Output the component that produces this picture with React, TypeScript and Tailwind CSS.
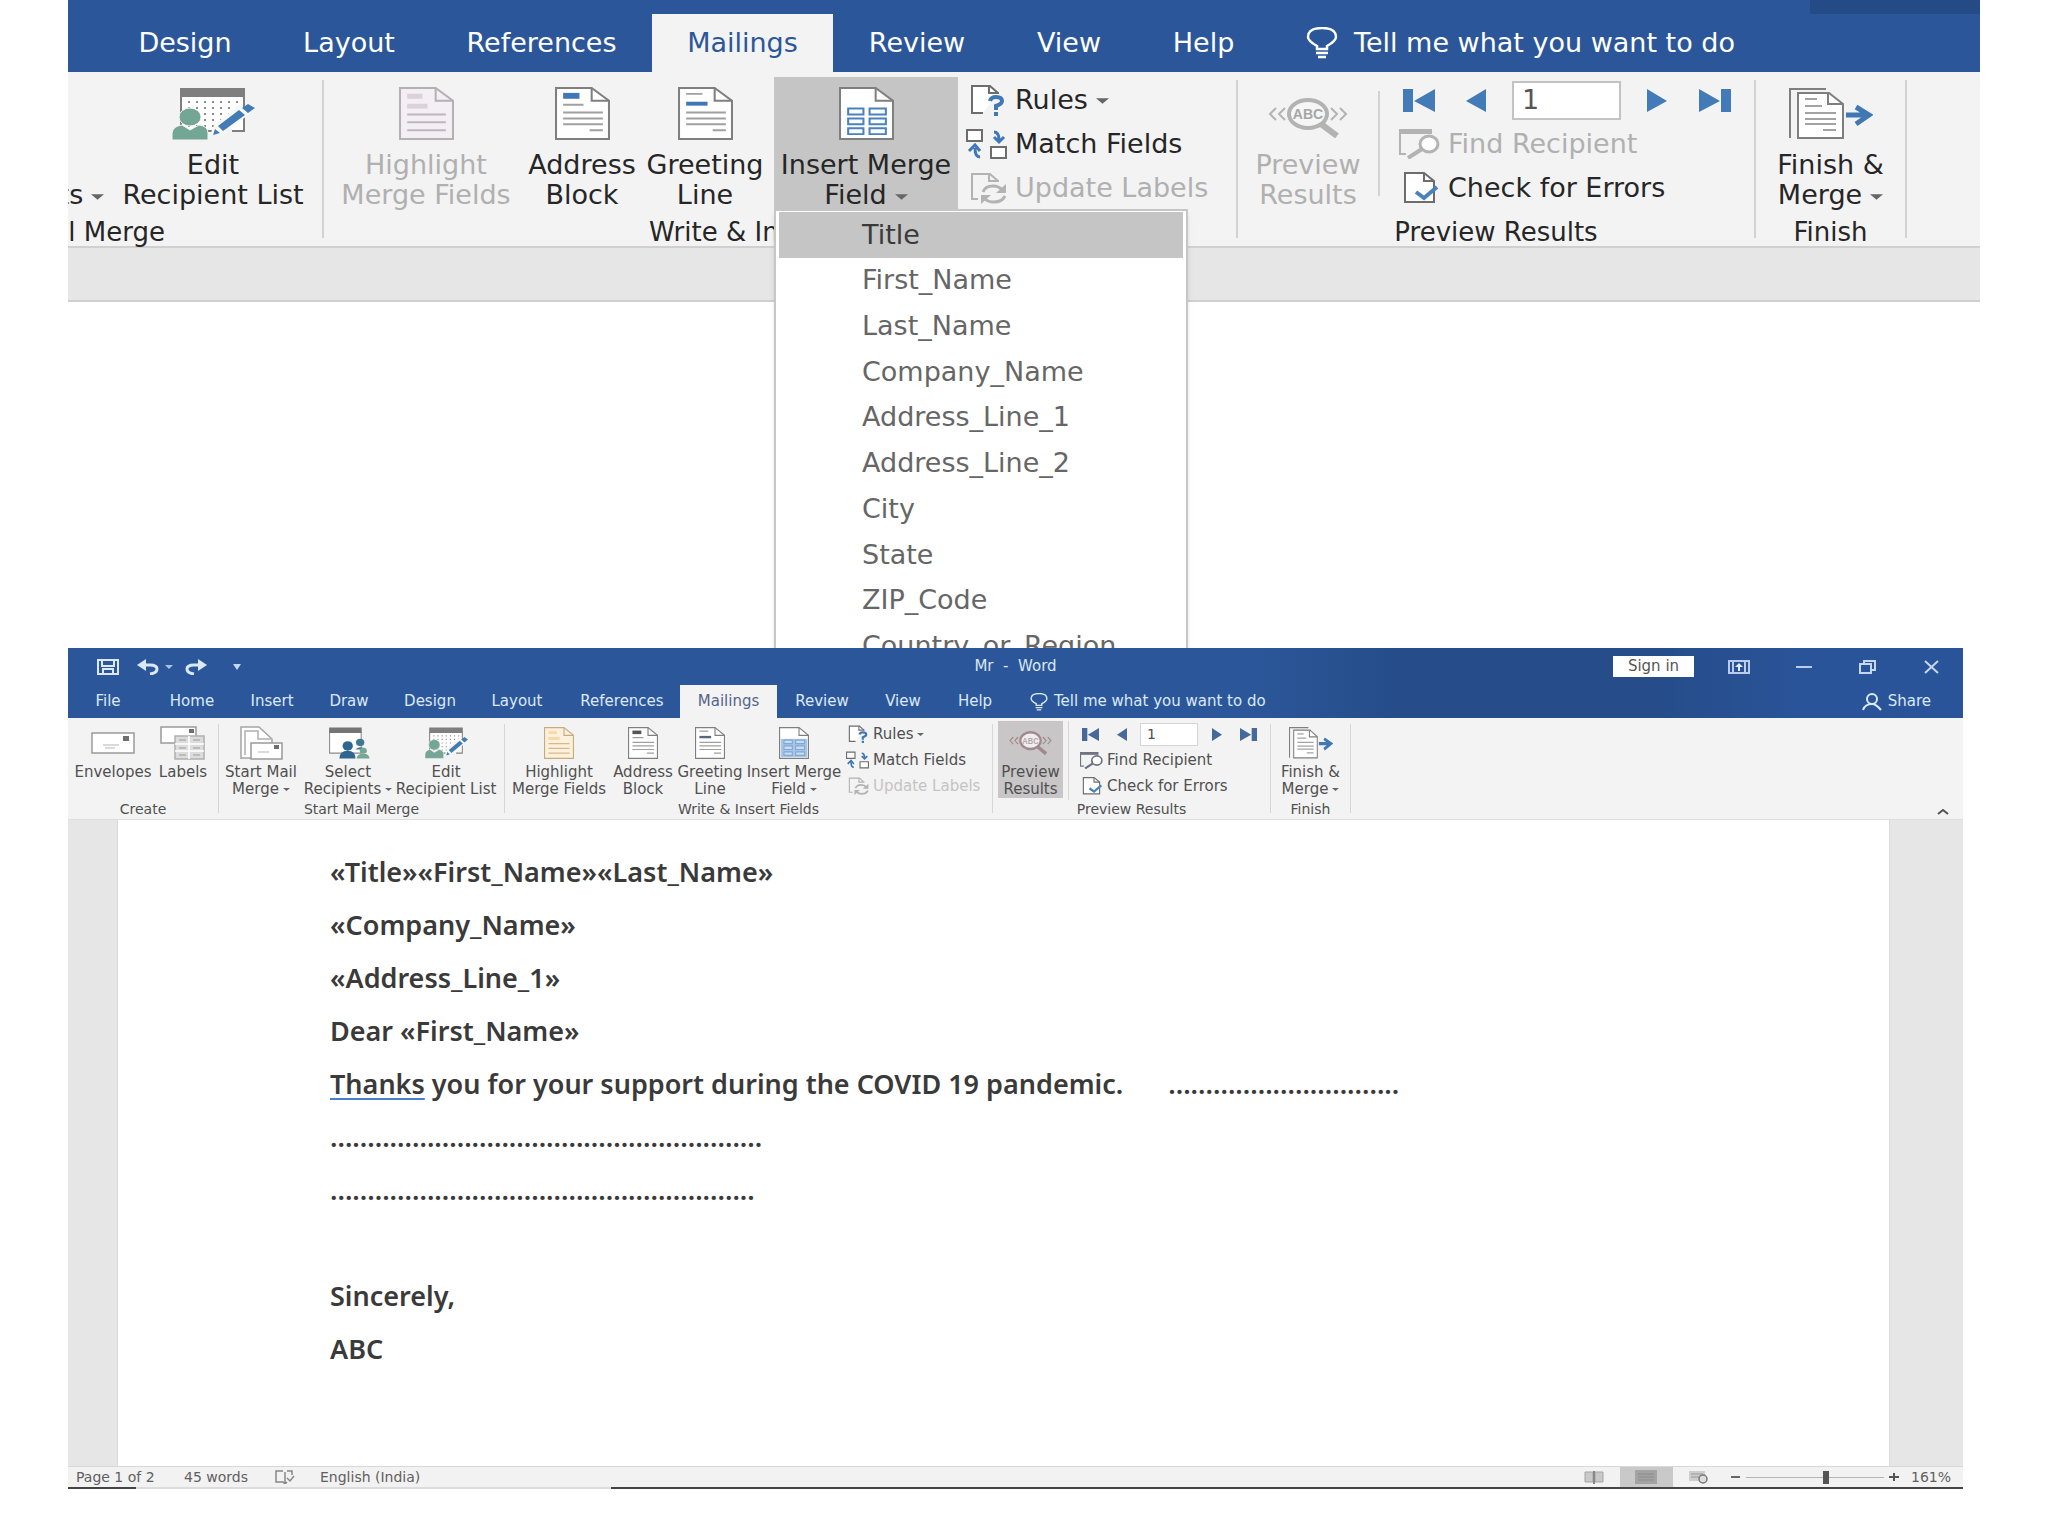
import React from "react";

type Children = { children?: React.ReactNode };

/* ---------- Icons ---------- */

function Sheet({ className, tone = "#7f7f7f", fill = "#fff", children }: Children & { className: string; tone?: string; fill?: string }) {
  return (
    <svg viewBox="0 0 54 54" preserveAspectRatio="none" className={className} aria-hidden="true">
      <path d="M1 1H36L53 14V53H1Z" fill={fill} stroke={tone} strokeWidth="2" />
      <path d="M36 1V14H53" fill="none" stroke={tone} strokeWidth="2" />
      {children}
    </svg>
  );
}

function HighlightIcon({ className, gold }: { className: string; gold?: boolean }) {
  const line = gold ? "#d9b98c" : "#bdb6bb";
  const block = gold ? "#f5d9a8" : "#d9d3d8";
  return (
    <Sheet className={className} tone={gold ? "#c9ab80" : "#b4b0b3"} fill={gold ? "#fdf0dc" : "#f4eff4"}>
      <path d="M8 7H23V12H8ZM8 17H28V22H8Z" fill={block} />
      <path d="M8 28H46M8 36H46M8 44H46" stroke={line} strokeWidth="2" />
    </Sheet>
  );
}

function AddressIcon({ className, accent = "#3f78b8" }: { className: string; accent?: string }) {
  return (
    <Sheet className={className}>
      <path d="M8 6H24V12H8Z" fill={accent} />
      <path d="M8 18H28M8 26H47M8 32H47M8 38H47M34 44H47" stroke="#a0a0a0" strokeWidth="2" />
    </Sheet>
  );
}

function GreetingIcon({ className, accent = "#3f78b8" }: { className: string; accent?: string }) {
  return (
    <Sheet className={className}>
      <path d="M8 7H24M8 26H47M8 32H47M8 38H47M34 44H47" stroke="#a0a0a0" strokeWidth="2" />
      <path d="M8 15H29V19H8Z" fill={accent} />
    </Sheet>
  );
}

function MergeFieldIcon({ className, filled }: { className: string; filled?: boolean }) {
  return (
    <Sheet className={className}>
      {filled && <path d="M3 20H51V51H3Z" fill="#a9c6e6" />}
      <path
        d="M9 22H24V28H9ZM30 22H46V28H30ZM9 32H24V38H9ZM30 32H46V38H30ZM9 42H24V48H9ZM30 42H46V48H30Z"
        fill={filled ? "#c9dcf0" : "#fff"}
        stroke={filled ? "#7fa8d3" : "#4a82bd"}
        strokeWidth="2"
      />
    </Sheet>
  );
}

function EditListIcon({ className }: { className: string }) {
  return (
    <svg viewBox="0 0 83 54" preserveAspectRatio="none" className={className} aria-hidden="true">
      <path d="M9 9H72V44H9Z" fill="#fff" stroke="#7f7f7f" strokeWidth="2" />
      <path d="M8 1H73V10H8Z" fill="#7f7f7f" />
      <path d="M16 15H68M16 21H68M16 27H68M16 33H68M16 39H60" stroke="#8c8c8c" strokeWidth="2" strokeDasharray="2 6" />
      <path d="M40 42H60V46H40Z" fill="#f3f3f3" />
      <path d="M0 53V46Q1 39 10 38L18 43L27 38Q36 39 36 46V53Z" fill="#74a695" stroke="#f3f3f3" />
      <ellipse cx="18" cy="30" rx="11" ry="9" fill="#74a695" stroke="#f3f3f3" />
      <path d="M38 48L42 38L67 18L79 26L52 46Z" fill="#f8f8f8" />
      <path d="M41 48L43 42L48 46ZM46 39L67 23L73 28L51 44ZM70 21L76 17L83 21L76 26Z" fill="#427cb5" />
    </svg>
  );
}

function SelectRecipientsIcon({ className }: { className: string }) {
  return (
    <svg viewBox="0 0 83 54" preserveAspectRatio="none" className={className} aria-hidden="true">
      <path d="M5 9H66V44H5Z" fill="#fff" stroke="#8a8a8a" strokeWidth="2" />
      <path d="M4 1H67V10H4Z" fill="#757575" />
      <ellipse cx="40" cy="32" rx="10" ry="8" fill="#2f6690" />
      <path d="M24 53Q24 40 40 40Q55 40 55 53Z" fill="#2f6690" />
      <ellipse cx="64" cy="26" rx="8" ry="6" fill="#3d7892" />
      <path d="M55 38Q64 30 74 38Z" fill="#3d7892" />
      <ellipse cx="70" cy="40" rx="7" ry="5" fill="#74a695" />
      <path d="M57 53Q58 45 70 45Q82 45 82 53Z" fill="#74a695" />
    </svg>
  );
}

function EnvelopeIcon() {
  return (
    <svg viewBox="0 0 44 22" className="h-[22px] w-[44px]" aria-hidden="true">
      <path d="M1 1H43V21H1Z" fill="#fff" stroke="#9a9a9a" strokeWidth="1.5" />
      <path d="M32 4H38V9H32Z" fill="#6f6f6f" />
      <path d="M12 13H28M14 16H24" stroke="#b5b5b5" />
    </svg>
  );
}

function LabelsIcon() {
  return (
    <svg viewBox="0 0 46 34" className="h-[34px] w-[46px]" aria-hidden="true">
      <path d="M1 1H36V17H1Z" fill="#fff" stroke="#9a9a9a" strokeWidth="1.5" />
      <path d="M29 3H34V7H29Z" fill="#6f6f6f" />
      <path d="M15 10H44V33H15Z" fill="#dcdcdc" stroke="#b0b0b0" strokeWidth="1.5" />
      <path d="M15 18H44M15 25H44M29 10V33" stroke="#fff" strokeWidth="1.5" />
      <path d="M19 14H26M33 14H40M19 22H26M33 22H40M19 29H26M33 29H40" stroke="#9c9c9c" />
    </svg>
  );
}

function StartMergeIcon() {
  return (
    <svg viewBox="0 0 43 34" className="h-[34px] w-[43px]" aria-hidden="true">
      <path d="M1 33V1H19L32 13V32H1" fill="#fff" stroke="#a5a5a5" strokeWidth="1.5" />
      <path d="M5 29V5H18V13H32" fill="none" stroke="#b0b0b0" strokeWidth="1.5" />
      <path d="M11 17H42V33H11Z" fill="#fff" stroke="#9a9a9a" strokeWidth="1.5" />
      <path d="M34 19H39V23H34Z" fill="#6f6f6f" />
      <path d="M18 26H29" stroke="#b5b5b5" />
    </svg>
  );
}

function RulesIcon({ className }: { className: string }) {
  return (
    <svg viewBox="0 0 41 32" preserveAspectRatio="none" className={className} aria-hidden="true">
      <path d="M17 29H6V2H24L32 9" fill="#fff" stroke="#6d6d6d" strokeWidth="2" />
      <path d="M23 2V9H33" fill="none" stroke="#6d6d6d" strokeWidth="2" />
      <path d="M24 17Q25 13 30 13Q36 13 36 17Q36 20 30 22V26M30 28V32" fill="none" stroke="#3f78b8" strokeWidth="4" />
    </svg>
  );
}

function MatchIcon({ className }: { className: string }) {
  return (
    <svg viewBox="0 0 41 32" preserveAspectRatio="none" className={className} aria-hidden="true">
      <path d="M1 2H16V13H1ZM25 19H40V30H25Z" fill="#fff" stroke="#6d6d6d" strokeWidth="2" />
      <path d="M28 4Q33 4 33 12M28 9L33 14L38 9" fill="none" stroke="#3f78b8" strokeWidth="3" />
      <path d="M14 29Q9 29 9 20M3 23L9 17L14 23" fill="none" stroke="#3f78b8" strokeWidth="3" />
    </svg>
  );
}

function UpdateIcon({ className }: { className: string }) {
  return (
    <svg viewBox="0 0 41 32" preserveAspectRatio="none" className={className} aria-hidden="true">
      <path d="M12 27H6V2H24L32 9M23 2V9H33" fill="none" stroke="#b3b3b3" strokeWidth="2" />
      <path d="M17 20Q19 14 27 14Q33 14 36 18M39 24Q36 30 28 30Q22 30 19 27" fill="none" stroke="#b3b3b3" strokeWidth="3" />
      <path d="M40 12V21H30ZM15 32V23H25Z" fill="#b3b3b3" />
    </svg>
  );
}

function PreviewIcon({ className, strong }: { className: string; strong?: boolean }) {
  const tone = strong ? "#a0888c" : "#b3b3b3";
  return (
    <svg viewBox="0 0 80 40" preserveAspectRatio="none" className={className} aria-hidden="true">
      <path d="M8 10L2 16L8 22M17 10L11 16L17 22M72 10L78 16L72 22M63 10L69 16L63 22" fill="none" stroke={tone} strokeWidth="2" />
      <ellipse cx="40" cy="16" rx="19" ry="14" fill={strong ? "#eee" : "#f6f6f6"} stroke={tone} strokeWidth="4" />
      <path d="M53 26L69 38" stroke={tone} strokeWidth="6" />
      <text x="40" y="21" textAnchor="middle" fontSize="14" fontWeight="700" fontFamily="Liberation Sans, sans-serif" fill={strong ? "#b5a5a8" : "#a6a6a6"}>
        ABC
      </text>
    </svg>
  );
}

function FindIcon({ className, tone }: { className: string; tone: string }) {
  return (
    <svg viewBox="0 0 41 30" preserveAspectRatio="none" className={className} aria-hidden="true">
      <path d="M1 1V25H7" fill="none" stroke={tone} strokeWidth="2" />
      <path d="M0 0H33V5H0Z" fill={tone} />
      <ellipse cx="30" cy="15" rx="9" ry="8" fill="#fff" stroke={tone} strokeWidth="3" />
      <path d="M23 20L9 29" stroke={tone} strokeWidth="4" />
    </svg>
  );
}

function CheckIcon({ className }: { className: string }) {
  return (
    <svg viewBox="0 0 41 32" preserveAspectRatio="none" className={className} aria-hidden="true">
      <path d="M6 1H25L35 9V30H6Z" fill="#fff" stroke="#6d6d6d" strokeWidth="2" />
      <path d="M25 1V9H35" fill="none" stroke="#6d6d6d" strokeWidth="2" />
      <path d="M17 20L25 26L38 15" fill="none" stroke="#4a82bd" strokeWidth="4" />
    </svg>
  );
}

function FinishIcon({ className }: { className: string }) {
  return (
    <svg viewBox="0 0 84 52" preserveAspectRatio="none" className={className} aria-hidden="true">
      <path d="M1 50V1H37" fill="none" stroke="#7f7f7f" strokeWidth="2" />
      <path d="M9 5H40L54 16V50H9Z" fill="#fff" stroke="#7f7f7f" strokeWidth="2" />
      <path d="M39 5V16H54" fill="none" stroke="#7f7f7f" strokeWidth="2" />
      <path d="M16 11H28M16 18H33M16 25H47M16 31H47M16 36H47M34 42H47" stroke="#a3a3a3" strokeWidth="2" />
      <path d="M57 27H80M67 19L80 27L67 36" fill="none" stroke="#4178b4" strokeWidth="5" />
    </svg>
  );
}

function Step({ kind, className, tone = "#437bb8" }: { kind: "first" | "prev" | "next" | "last"; className: string; tone?: string }) {
  const d = {
    first: "M0 0H10V23H0ZM32 0V23L11 12Z",
    prev: "M20 0V23L0 12Z",
    next: "M0 0V23L20 12Z",
    last: "M0 0V23L21 12ZM22 0H32V23H22Z",
  }[kind];
  const wide = kind === "first" || kind === "last";
  return (
    <svg viewBox={wide ? "0 0 32 23" : "0 0 20 23"} preserveAspectRatio="none" className={className} aria-hidden="true">
      <path d={d} fill={tone} />
    </svg>
  );
}

function Bulb({ className }: { className: string }) {
  return (
    <svg viewBox="0 0 32 32" preserveAspectRatio="none" className={className} aria-hidden="true">
      <path
        d="M11 22V19Q2 14 2 10Q2 1 16 1Q30 1 30 10Q30 14 21 19V22ZM10 26H22M12 30H20"
        fill="none"
        stroke="currentColor"
        strokeWidth="2.5"
      />
    </svg>
  );
}

function Caret({ big }: { big?: boolean }) {
  return (
    <svg viewBox="0 0 14 6" className={big ? "ml-2 inline-block h-[6px] w-[13px] align-middle" : "ml-1 inline-block h-[3px] w-[7px] align-middle"} aria-hidden="true">
      <path d="M0 0H14L7 6Z" fill="#666" />
    </svg>
  );
}

/* ---------- Close-up ribbon ---------- */

function BigButton({ icon, children, className }: Children & { icon: React.ReactNode; className: string }) {
  return (
    <button type="button" className={`flex h-[133px] shrink-0 flex-col items-center whitespace-nowrap text-center ${className}`}>
      <span className="flex h-[73px] shrink-0 items-center justify-center">{icon}</span>
      <span className="block leading-[30px]">{children}</span>
    </button>
  );
}

function BigRow({ icon, children, muted }: Children & { icon: React.ReactNode; muted?: boolean }) {
  return (
    <button type="button" className={`flex h-[44px] items-center gap-2 whitespace-nowrap ${muted ? "text-[#b0b0b0]" : ""}`}>
      {icon}
      <span>{children}</span>
    </button>
  );
}

function BigGroup({ label, children, className, labelClass = "text-center" }: Children & { label: string; className: string; labelClass?: string }) {
  return (
    <div className={`flex shrink-0 flex-col pt-[5px] ${className}`}>
      <div className="flex h-[133px] w-full">{children}</div>
      <div className={`pt-[6px] text-[26px] leading-[32px] whitespace-nowrap ${labelClass}`}>{label}</div>
    </div>
  );
}

const BigRule = () => <div className="my-2 w-[2px] shrink-0 bg-[#d2d2d2]" />;

const bigTabs = [
  { name: "Design", size: "w-[164px]" },
  { name: "Layout", size: "w-[164px]" },
  { name: "References", size: "w-[221px]" },
  { name: "Mailings", size: "w-[181px]" },
  { name: "Review", size: "w-[168px]" },
  { name: "View", size: "w-[136px]" },
  { name: "Help", size: "w-[133px]" },
];

const mergeFields = [
  "Title",
  "First_Name",
  "Last_Name",
  "Company_Name",
  "Address_Line_1",
  "Address_Line_2",
  "City",
  "State",
  "ZIP_Code",
  "Country_or_Region",
];

function FieldMenu() {
  return (
    <ul className="absolute left-0 top-[132px] flex h-[465px] w-[414px] flex-col border-2 border-[#c6c6c6] bg-white px-[3px] pb-[3px] pt-px text-[27px] text-[#666] shadow-md">
      {mergeFields.map((field, i) => (
        <li key={field} className="flex flex-1">
          <button type="button" className={`flex w-full items-center pl-[83px] ${i === 0 ? "bg-[#c5c5c5] text-[#3a3a3a]" : ""}`}>
            {field}
          </button>
        </li>
      ))}
    </ul>
  );
}

function CloseUp() {
  const icon = "h-[53px] w-[55px]";
  const small = "h-[32px] w-[41px] shrink-0";
  return (
    <section className="mr-[68px] overflow-hidden">
      <nav className="relative flex h-[72px] items-end bg-[#2b579a] pl-[35px] text-[27px] text-white">
        <div className="absolute right-0 top-0 h-[14px] w-[170px] bg-[#254b86]" />
        {bigTabs.map((t) => (
          <button
            key={t.name}
            type="button"
            className={`h-[58px] shrink-0 ${t.size} ${t.name === "Mailings" ? "bg-[#f3f3f3] text-[#2b579a]" : ""}`}
          >
            {t.name}
          </button>
        ))}
        <button type="button" className="ml-[36px] flex h-[58px] items-center gap-4 whitespace-nowrap">
          <Bulb className="h-[32px] w-[32px]" />
          Tell me what you want to do
        </button>
      </nav>

      <div className="relative z-10 flex h-[176px] border-b-2 border-[#d0d0d0] bg-[#f3f3f3] text-[27px] text-[#262626]">
        <BigGroup label="Start Mail Merge" className="w-[254px]" labelClass="flex justify-end pr-[157px]">
          <div className="flex w-full justify-end pr-[4px]">
            <BigButton icon={<SelectRecipientsIcon className="h-[54px] w-[76px]" />} className="w-[168px]">
              Select
              <br />
              Recipients
              <Caret big />
            </BigButton>
            <BigButton icon={<EditListIcon className="h-[54px] w-[83px]" />} className="w-[210px]">
              Edit
              <br />
              Recipient List
            </BigButton>
          </div>
        </BigGroup>
        <BigRule />
        <BigGroup label="Write & Insert Fields" className="w-[912px]">
          <BigButton icon={<HighlightIcon className={icon} />} className="w-[204px] text-[#b0b0b0]">
            Highlight
            <br />
            Merge Fields
          </BigButton>
          <BigButton icon={<AddressIcon className={icon} />} className="w-[108px]">
            Address
            <br />
            Block
          </BigButton>
          <BigButton icon={<GreetingIcon className={icon} />} className="w-[138px]">
            Greeting
            <br />
            Line
          </BigButton>
          <div className="relative shrink-0">
            <BigButton icon={<MergeFieldIcon className={icon} />} className="w-[184px] bg-[#c5c5c5]">
              Insert Merge
              <br />
              Field
              <Caret big />
            </BigButton>
            <FieldMenu />
          </div>
          <div className="ml-[8px] pt-px">
            <BigRow icon={<RulesIcon className={small} />}>
              Rules
              <Caret big />
            </BigRow>
            <BigRow icon={<MatchIcon className={small} />}>Match Fields</BigRow>
            <BigRow icon={<UpdateIcon className={small} />} muted>
              Update Labels
            </BigRow>
          </div>
        </BigGroup>
        <BigRule />
        <BigGroup label="Preview Results" className="w-[516px]">
          <BigButton icon={<PreviewIcon className="mt-[8px] h-[40px] w-[80px]" />} className="w-[140px] text-[#b0b0b0]">
            Preview
            <br />
            Results
          </BigButton>
          <div className="mb-[14px] mt-[14px] w-[2px] shrink-0 bg-[#d2d2d2]" />
          <div className="ml-[19px] pt-px">
            <div className="flex h-[44px] items-center">
              <button type="button" aria-label="First record" className="ml-[4px]">
                <Step kind="first" className="h-[23px] w-[32px]" />
              </button>
              <button type="button" aria-label="Previous record" className="ml-[31px]">
                <Step kind="prev" className="h-[23px] w-[20px]" />
              </button>
              <input
                aria-label="Record number"
                defaultValue="1"
                className="ml-[26px] h-[39px] w-[109px] border-2 border-[#c3c3c3] bg-white pl-[8px] text-[#555] outline-none"
              />
              <button type="button" aria-label="Next record" className="ml-[26px]">
                <Step kind="next" className="h-[23px] w-[20px]" />
              </button>
              <button type="button" aria-label="Last record" className="ml-[32px]">
                <Step kind="last" className="h-[23px] w-[32px]" />
              </button>
            </div>
            <BigRow icon={<FindIcon tone="#b3b3b3" className="h-[30px] w-[41px]" />} muted>
              Find Recipient
            </BigRow>
            <BigRow icon={<CheckIcon className={small} />}>Check for Errors</BigRow>
          </div>
        </BigGroup>
        <BigRule />
        <BigGroup label="Finish" className="w-[149px]">
          <BigButton icon={<FinishIcon className="h-[52px] w-[84px]" />} className="w-full">
            Finish &amp;
            <br />
            Merge
            <Caret big />
          </BigButton>
        </BigGroup>
        <BigRule />
      </div>
      <div className="h-[54px] border-b-2 border-[#cfcfcf] bg-[#e6e6e6]" />
      <div className="h-[346px] bg-white" />
    </section>
  );
}

/* ---------- Full window ---------- */

const smallTabs = [
  { name: "File", size: "w-[80px]" },
  { name: "Home", size: "w-[88px]" },
  { name: "Insert", size: "w-[72px]" },
  { name: "Draw", size: "w-[82px]" },
  { name: "Design", size: "w-[80px]" },
  { name: "Layout", size: "w-[94px]" },
  { name: "References", size: "w-[116px]" },
  { name: "Mailings", size: "w-[97px]" },
  { name: "Review", size: "w-[90px]" },
  { name: "View", size: "w-[72px]" },
  { name: "Help", size: "w-[72px]" },
];

function TitleBar() {
  return (
    <div className="grid h-[37px] grid-cols-3 items-center">
      <div className="flex items-center pl-[29px]">
        <button type="button" aria-label="Save">
          <svg viewBox="0 0 22 16" className="h-[16px] w-[22px]" aria-hidden="true">
            <path d="M1 1H21V15H1ZM5 1V7H17V1M6 15V10H16V15" fill="none" stroke="#dbe8fa" strokeWidth="2" />
          </svg>
        </button>
        <button type="button" aria-label="Undo" className="ml-[18px] flex items-center gap-1.5">
          <svg viewBox="0 0 22 16" className="h-[16px] w-[22px]" aria-hidden="true">
            <path d="M5 6H13Q20 6 20 10Q20 14 13 15" fill="none" stroke="#dbe8fa" strokeWidth="3" />
            <path d="M0 6L9 0V12Z" fill="#dbe8fa" />
          </svg>
          <svg viewBox="0 0 8 4" className="h-[4px] w-[8px]" aria-hidden="true">
            <path d="M0 0H8L4 4Z" fill="#a9c3e8" />
          </svg>
        </button>
        <button type="button" aria-label="Redo" className="ml-[12px]">
          <svg viewBox="0 0 22 16" className="h-[16px] w-[22px]" aria-hidden="true">
            <path d="M17 6H9Q2 6 2 10Q2 14 9 15" fill="none" stroke="#dbe8fa" strokeWidth="3" />
            <path d="M22 6L13 0V12Z" fill="#dbe8fa" />
          </svg>
        </button>
        <button type="button" aria-label="Customize toolbar" className="ml-[26px]">
          <svg viewBox="0 0 8 6" className="h-[6px] w-[8px]" aria-hidden="true">
            <path d="M0 0H8L4 6Z" fill="#c5d8f3" />
          </svg>
        </button>
      </div>
      <div className="text-center">Mr&nbsp; -&nbsp; Word</div>
      <div className="flex items-center justify-end pr-[24px]">
        <button type="button" className="h-[21px] w-[81px] bg-white leading-[21px] text-[#555]">
          Sign in
        </button>
        <button type="button" aria-label="Ribbon display options" className="ml-[34px]">
          <svg viewBox="0 0 22 14" className="h-[14px] w-[22px]" aria-hidden="true">
            <path d="M1 1H21V13H1ZM5 1V13M17 1V13" fill="none" stroke="#b9cdea" strokeWidth="2" />
            <path d="M11 3L15 7H12V11H10V7H7Z" fill="#e4edf9" />
          </svg>
        </button>
        <button type="button" aria-label="Minimize" className="ml-[46px]">
          <svg viewBox="0 0 16 14" className="h-[14px] w-[16px]" aria-hidden="true">
            <path d="M0 7H16" stroke="#b9cdea" strokeWidth="2" />
          </svg>
        </button>
        <button type="button" aria-label="Restore" className="ml-[47px]">
          <svg viewBox="0 0 18 14" className="h-[14px] w-[18px]" aria-hidden="true">
            <path d="M1 4H12V13H1ZM5 4V1H16V10H12" fill="none" stroke="#c5d6ef" strokeWidth="2" />
          </svg>
        </button>
        <button type="button" aria-label="Close" className="ml-[47px]">
          <svg viewBox="0 0 15 14" className="h-[14px] w-[15px]" aria-hidden="true">
            <path d="M1 1L14 13M14 1L1 13" stroke="#c5d6ef" strokeWidth="2" />
          </svg>
        </button>
      </div>
    </div>
  );
}

function SmallTabs() {
  return (
    <nav className="flex h-[33px]">
      {smallTabs.map((t) => (
        <button key={t.name} type="button" className={`shrink-0 ${t.size} ${t.name === "Mailings" ? "bg-[#f3f3f3] text-[#54648c]" : ""}`}>
          {t.name}
        </button>
      ))}
      <button type="button" className="ml-[19px] flex items-center gap-1.5 whitespace-nowrap">
        <Bulb className="h-[18px] w-[18px]" />
        Tell me what you want to do
      </button>
      <button type="button" className="ml-auto mr-[32px] flex items-center gap-1.5">
        <svg viewBox="0 0 20 18" className="h-[18px] w-[20px]" aria-hidden="true">
          <circle cx="10" cy="6" r="5" fill="none" stroke="#dbe8fa" strokeWidth="2" />
          <path d="M1 17Q3 11 10 11Q14 11 19 17" fill="none" stroke="#dbe8fa" strokeWidth="2" />
        </svg>
        Share
      </button>
    </nav>
  );
}

function SmallButton({ icon, children, className }: Children & { icon: React.ReactNode; className: string }) {
  return (
    <button type="button" className={`flex h-[77px] shrink-0 flex-col items-center whitespace-nowrap text-center ${className}`}>
      <span className="flex h-[43px] shrink-0 items-center">{icon}</span>
      <span className="block leading-[17px]">{children}</span>
    </button>
  );
}

function SmallRow({ icon, children, muted }: Children & { icon: React.ReactNode; muted?: boolean }) {
  return (
    <button type="button" className={`flex h-[26px] items-center gap-1 whitespace-nowrap ${muted ? "text-[#c4c4c4]" : ""}`}>
      {icon}
      <span>{children}</span>
    </button>
  );
}

function SmallGroup({ label, children, className }: Children & { label: string; className: string }) {
  return (
    <div className={`flex shrink-0 flex-col pt-[3px] ${className}`}>
      <div className="flex h-[79px] w-full">{children}</div>
      <div className="text-center text-[14px] leading-[19px] whitespace-nowrap">{label}</div>
    </div>
  );
}

const SmallRule = () => <div className="my-[6px] w-px shrink-0 bg-[#d6d6d6]" />;

function SmallRibbon() {
  const icon = "h-[32px] w-[30px]";
  const small = "h-[18px] w-[23px] shrink-0";
  return (
    <div className="flex h-[102px] border-b border-[#dedede] bg-[#f3f3f3] text-[15px] text-[#505050]">
      <SmallGroup label="Create" className="w-[150px]">
        <SmallButton icon={<EnvelopeIcon />} className="w-[90px]">
          Envelopes
        </SmallButton>
        <SmallButton icon={<LabelsIcon />} className="w-[50px]">
          Labels
        </SmallButton>
      </SmallGroup>
      <SmallRule />
      <SmallGroup label="Start Mail Merge" className="w-[285px]">
        <SmallButton icon={<StartMergeIcon />} className="w-[84px]">
          Start Mail
          <br />
          Merge
          <Caret />
        </SmallButton>
        <SmallButton icon={<SelectRecipientsIcon className="h-[32px] w-[43px]" />} className="w-[90px]">
          Select
          <br />
          Recipients
          <Caret />
        </SmallButton>
        <SmallButton icon={<EditListIcon className="h-[32px] w-[43px]" />} className="w-[106px]">
          Edit
          <br />
          Recipient List
        </SmallButton>
      </SmallGroup>
      <SmallRule />
      <SmallGroup label="Write & Insert Fields" className="w-[487px]">
        <SmallButton icon={<HighlightIcon className={icon} gold />} className="w-[108px]">
          Highlight
          <br />
          Merge Fields
        </SmallButton>
        <SmallButton icon={<AddressIcon className={icon} accent="#555" />} className="w-[60px]">
          Address
          <br />
          Block
        </SmallButton>
        <SmallButton icon={<GreetingIcon className={icon} accent="#5a6580" />} className="w-[74px]">
          Greeting
          <br />
          Line
        </SmallButton>
        <SmallButton icon={<MergeFieldIcon className={icon} filled />} className="w-[94px]">
          Insert Merge
          <br />
          Field
          <Caret />
        </SmallButton>
        <div className="ml-[5px]">
          <SmallRow icon={<RulesIcon className={small} />}>
            Rules
            <Caret />
          </SmallRow>
          <SmallRow icon={<MatchIcon className={small} />}>Match Fields</SmallRow>
          <SmallRow icon={<UpdateIcon className={small} />} muted>
            Update Labels
          </SmallRow>
        </div>
      </SmallGroup>
      <SmallRule />
      <SmallGroup label="Preview Results" className="w-[277px]">
        <SmallButton icon={<PreviewIcon className="h-[24px] w-[43px]" strong />} className="ml-[5px] w-[65px] bg-[#c8c6c6]">
          Preview
          <br />
          Results
        </SmallButton>
        <div className="ml-[5px] w-px shrink-0 bg-[#d6d6d6]" />
        <div className="ml-[11px]">
          <div className="flex h-[26px] items-center">
            <button type="button" aria-label="First record" className="ml-[2px]">
              <Step kind="first" className="h-[13px] w-[17px]" tone="#46699a" />
            </button>
            <button type="button" aria-label="Previous record" className="ml-[18px]">
              <Step kind="prev" className="h-[13px] w-[10px]" tone="#46699a" />
            </button>
            <input
              aria-label="Record number"
              defaultValue="1"
              className="ml-[13px] h-[23px] w-[58px] border border-[#d5d5d5] bg-white pl-[6px] text-[14px] outline-none"
            />
            <button type="button" aria-label="Next record" className="ml-[14px]">
              <Step kind="next" className="h-[13px] w-[10px]" tone="#46699a" />
            </button>
            <button type="button" aria-label="Last record" className="ml-[18px]">
              <Step kind="last" className="h-[13px] w-[17px]" tone="#46699a" />
            </button>
          </div>
          <SmallRow icon={<FindIcon tone="#6f7482" className="h-[17px] w-[23px]" />}>Find Recipient</SmallRow>
          <SmallRow icon={<CheckIcon className={small} />}>Check for Errors</SmallRow>
        </div>
      </SmallGroup>
      <SmallRule />
      <SmallGroup label="Finish" className="w-[79px]">
        <SmallButton icon={<FinishIcon className="h-[32px] w-[44px]" />} className="w-full">
          Finish &amp;
          <br />
          Merge
          <Caret />
        </SmallButton>
      </SmallGroup>
      <SmallRule />
      <button type="button" aria-label="Collapse ribbon" className="mb-[4px] ml-auto mr-[14px] self-end">
        <svg viewBox="0 0 12 6" className="h-[6px] w-[12px]" aria-hidden="true">
          <path d="M1 5L6 1L11 5" fill="none" stroke="#555" strokeWidth="2" />
        </svg>
      </button>
    </div>
  );
}

function Letter() {
  return (
    <div className="bg-[#e6e6e6] pl-[49px] pr-[73px]">
      <div className="border-x border-[#dadada] bg-white pb-[91px] pl-[212px] pt-[25px] font-['Noto_Sans',sans-serif] text-[27px] font-semibold leading-[53px] text-[#3a3a3a]">
        <p>«Title»«First_Name»«Last_Name»</p>
        <p>«Company_Name»</p>
        <p>«Address_Line_1»</p>
        <p>Dear «First_Name»</p>
        <p className="flex">
          <span>
            <span className="underline decoration-[#4a7fd0] decoration-2 underline-offset-4">Thanks</span> you for your support during the COVID 19 pandemic.
          </span>
          <span className="ml-[45px]">{".".repeat(31)}</span>
        </p>
        <p>{".".repeat(58)}</p>
        <p>{".".repeat(57)}</p>
        <p>&nbsp;</p>
        <p>Sincerely,</p>
        <p>ABC</p>
      </div>
    </div>
  );
}

function StatusBar() {
  return (
    <footer>
      <div className="flex h-[21px] items-center border-t border-[#d8d8d8] bg-[#f2f2f2] pl-[8px] pr-[12px] text-[14px] text-[#606060]">
        <span className="w-[108px]">Page 1 of 2</span>
        <span className="w-[91px]">45 words</span>
        <button type="button" aria-label="Proofing" className="w-[45px]">
          <svg viewBox="0 0 20 14" className="h-[14px] w-[20px]" aria-hidden="true">
            <path d="M8 1H1V12H8L10 14L12 12M12 1H17V5M10 2V13M12 8L15 11L19 6" fill="none" stroke="#888" strokeWidth="1.5" />
          </svg>
        </button>
        <span>English (India)</span>
        <div className="ml-auto flex items-center">
          <button type="button" aria-label="Read mode">
            <svg viewBox="0 0 20 14" className="h-[14px] w-[20px]" aria-hidden="true">
              <path d="M1 2H9V12H1ZM11 2H19V12H11Z" fill="#c9c9c9" stroke="#a5a5a5" />
              <path d="M10 1V14" stroke="#888" strokeWidth="2" />
            </svg>
          </button>
          <button type="button" aria-label="Print layout" className="ml-[16px] flex h-[20px] w-[53px] items-center justify-center bg-[#c9c9c9]">
            <svg viewBox="0 0 22 14" className="h-[14px] w-[22px]" aria-hidden="true">
              <path d="M0 0H22V14H0Z" fill="#a3a3a3" />
              <path d="M3 4H19M3 7H19M3 10H19" stroke="#8b8b8b" />
            </svg>
          </button>
          <button type="button" aria-label="Web layout" className="ml-[16px]">
            <svg viewBox="0 0 20 14" className="h-[14px] w-[20px]" aria-hidden="true">
              <path d="M0 1H16V11H0Z" fill="#cdcdcd" />
              <path d="M2 4H14M2 7H10" stroke="#999" />
              <circle cx="14" cy="9" r="4" fill="#ddd" stroke="#777" strokeWidth="1.5" />
            </svg>
          </button>
          <button type="button" aria-label="Zoom out" className="ml-[22px]">
            <svg viewBox="0 0 10 10" className="h-[10px] w-[10px]" aria-hidden="true">
              <path d="M0 5H9" stroke="#666" strokeWidth="2" />
            </svg>
          </button>
          <input
            type="range"
            aria-label="Zoom"
            min="0"
            max="100"
            defaultValue="58"
            className="mx-[5px] h-[14px] w-[138px] appearance-none bg-[linear-gradient(#b5b5b5,#b5b5b5)] bg-[length:100%_1px] bg-center bg-no-repeat [&::-webkit-slider-thumb]:h-[13px] [&::-webkit-slider-thumb]:w-[6px] [&::-webkit-slider-thumb]:appearance-none [&::-webkit-slider-thumb]:bg-[#555]"
          />
          <button type="button" aria-label="Zoom in">
            <svg viewBox="0 0 10 10" className="h-[10px] w-[10px]" aria-hidden="true">
              <path d="M0 5H10M5 1V9" stroke="#555" strokeWidth="2" />
            </svg>
          </button>
          <span className="ml-[12px]">161%</span>
        </div>
      </div>
      <div className="flex h-[2px]">
        <div className="w-[68px] bg-[#444]" />
        <div className="w-[475px] bg-[#dcdcdc]" />
        <div className="flex-1 bg-[#444]" />
      </div>
    </footer>
  );
}

function WordWindow() {
  return (
    <section className="relative z-20 mr-[85px]">
      <header className="bg-[linear-gradient(90deg,#2b579a_0%,#2b579a_62%,#264d8a_70%,#264d8a_84%,#2a549a_92%)] text-[15px] text-[#dce8f8]">
        <TitleBar />
        <SmallTabs />
      </header>
      <SmallRibbon />
      <Letter />
      <StatusBar />
    </section>
  );
}

export default function App() {
  return (
    <main className="min-h-screen overflow-hidden bg-white pl-[68px] font-['DejaVu_Sans',sans-serif]">
      <CloseUp />
      <WordWindow />
    </main>
  );
}
